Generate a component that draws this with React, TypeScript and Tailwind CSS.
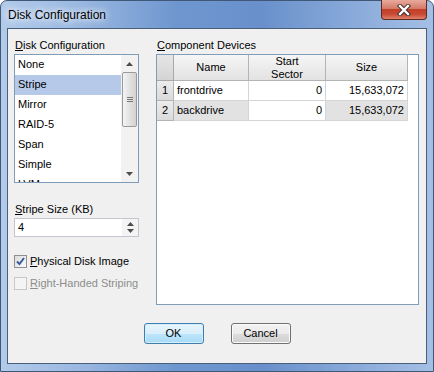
const items = ["None", "Stripe", "Mirror", "RAID-5", "Span", "Simple", "LVM"];

const rows = [
  { n: "1", name: "frontdrive", start: "0", size: "15,633,072", alt: false },
  { n: "2", name: "backdrive", start: "0", size: "15,633,072", alt: true },
];

function Arrow({ up }: { up?: boolean }) {
  return (
    <svg width="7" height="4" viewBox="0 0 7 4">
      <path d={up ? "M0 4 L3.5 0 L7 4 Z" : "M0 0 L3.5 4 L7 0 Z"} fill="#4d4d4d" />
    </svg>
  );
}

function Checkbox({ checked, disabled }: { checked?: boolean; disabled?: boolean }) {
  return (
    <div
      className={`w-[13px] h-[13px] border ${
        disabled
          ? "border-[#c8c8c8] bg-[#f4f4f4]"
          : "border-[#8e8f8f] bg-[linear-gradient(135deg,#dcdcdc,#fafafa)]"
      } flex items-center justify-center`}
    >
      {checked && (
        <svg width="9" height="9" viewBox="0 0 9 9">
          <path d="M1 4.5 L3.5 7 L8 1" fill="none" stroke="#3a5a9c" strokeWidth="2" />
        </svg>
      )}
    </div>
  );
}

export default function App() {
  return (
    <div className="w-[434px] h-[372px] bg-white font-['Liberation_Sans',Arial,sans-serif] text-[11px] text-black">
      <div className="w-full h-full rounded-t-[7px] border border-[#3f5878] bg-[linear-gradient(to_right,#b3cbea,#9ab8e1_18%,#6f97cf_40%,#6990cb_60%,#8eaedc_85%,#a5bfe4)] flex flex-col px-[6px] pb-[7px]">
        {/* title bar */}
        <div className="h-[27px] flex items-start">
          <div className="h-[27px] flex items-center pl-[1px] text-[12px] [text-shadow:0_0_6px_#ffffff,0_0_10px_#ffffff]">
            Disk Configuration
          </div>
          <div className="ml-auto -mt-[1px] w-[46px] h-[20px] rounded-b-[4px] border border-t-0 border-[#5c2b24] bg-[linear-gradient(#e8a99c,#d47a67_45%,#c2402a_50%,#c84a33_75%,#e0826b)] flex items-center justify-center">
            <svg width="14" height="12" viewBox="0 0 14 12">
              <path d="M3 2 L11 10 M11 2 L3 10" stroke="#3b2a2a" strokeWidth="4.2" strokeLinecap="square" />
              <path d="M3 2 L11 10 M11 2 L3 10" stroke="#ffffff" strokeWidth="2.4" strokeLinecap="square" />
            </svg>
          </div>
        </div>

        {/* client area */}
        <div className="flex-1 border border-[#4b5f7d] bg-[#f0f0f0] flex flex-col">
          <div className="flex pl-[6px] pt-[8px]">
            {/* left column */}
            <div className="w-[125px] flex flex-col">
              <div className="h-[17px] leading-[17px] pl-[1px]">
                <span className="underline">D</span>isk Configuration
              </div>
              <div className="h-[129px] border border-[#7f9db9] bg-white flex">
                <div className="flex-1 overflow-hidden">
                  {items.map((it) => (
                    <div
                      key={it}
                      className={`h-[20px] leading-[19px] pl-[3px] ${it === "Stripe" ? "bg-[#b6c9e9]" : ""}`}
                    >
                      {it}
                    </div>
                  ))}
                </div>
                <div className="w-[17px] bg-[#f2f2f2] flex flex-col">
                  <div className="h-[17px] flex items-center justify-center">
                    <Arrow up />
                  </div>
                  <div className="h-[55px] mx-[1px] rounded-[2px] border border-[#9a9a9a] bg-[linear-gradient(to_right,#f4f4f4,#e2e2e2_50%,#d2d2d2)] flex flex-col items-center justify-center gap-[1px]">
                    <div className="w-[6px] h-[1px] bg-[#777]" />
                    <div className="w-[6px] h-[1px] bg-[#777]" />
                    <div className="w-[6px] h-[1px] bg-[#777]" />
                  </div>
                  <div className="mt-auto h-[17px] flex items-center justify-center">
                    <Arrow />
                  </div>
                </div>
              </div>

              <div className="mt-[17px] h-[18px] leading-[18px] pl-[1px]">
                <span className="underline">S</span>tripe Size (KB)
              </div>
              <div className="h-[19px] border border-[#c3c6cc] bg-white flex">
                <div className="flex-1 pl-[3px] leading-[17px]">4</div>
                <div className="w-[16px] flex flex-col items-center justify-center gap-[3px] bg-[#f4f4f4]">
                  <Arrow up />
                  <Arrow />
                </div>
              </div>

              <div className="mt-[18px] h-[13px] flex items-center gap-[3px]">
                <Checkbox checked />
                <span>
                  <span className="underline">P</span>hysical Disk Image
                </span>
              </div>
              <div className="mt-[9px] h-[13px] flex items-center gap-[3px] text-[#8d8d8d]">
                <Checkbox disabled />
                <span>
                  <span className="underline">R</span>ight-Handed Striping
                </span>
              </div>
            </div>

            {/* right column */}
            <div className="ml-[17px] w-[263px] flex flex-col">
              <div className="h-[17px] leading-[17px] pl-[1px]">
                <span className="underline">C</span>omponent Devices
              </div>
              <div className="h-[251px] border border-[#7f9db9] bg-white">
                <div className="grid grid-cols-[17px_75px_77px_82px]">
                  <div className="h-[26px] bg-[linear-gradient(#e6e6e6,#d4d4d4)] border-r border-b border-[#a8a8a8]" />
                  <div className="h-[26px] bg-[linear-gradient(#f6f6f6,#e2e2e2)] border-r border-b border-[#b4b4b4] flex items-center justify-center">
                    Name
                  </div>
                  <div className="h-[26px] bg-[linear-gradient(#f6f6f6,#e2e2e2)] border-r border-b border-[#b4b4b4] flex items-center justify-center text-center leading-[13px]">
                    Start
                    <br />
                    Sector
                  </div>
                  <div className="h-[26px] bg-[linear-gradient(#f6f6f6,#e2e2e2)] border-r border-b border-[#b4b4b4] flex items-center justify-center">
                    Size
                  </div>
                  {rows.map((r) => (
                    <>
                      <div
                        key={r.n + "h"}
                        className="h-[20px] bg-[linear-gradient(#ececec,#dadada)] border-r border-b border-[#b4b4b4] flex items-center justify-center"
                      >
                        {r.n}
                      </div>
                      <div
                        key={r.n + "a"}
                        className={`h-[20px] ${r.alt ? "bg-[#e2e2e2]" : "bg-white"} border-r border-b border-[#d4d4d4] flex items-center pl-[3px]`}
                      >
                        {r.name}
                      </div>
                      <div
                        key={r.n + "b"}
                        className="h-[20px] bg-white border-r border-b border-[#d4d4d4] flex items-center justify-end pr-[3px]"
                      >
                        {r.start}
                      </div>
                      <div
                        key={r.n + "c"}
                        className={`h-[20px] ${r.alt ? "bg-[#e2e2e2]" : "bg-white"} border-r border-b border-[#d4d4d4] flex items-center justify-end pr-[3px]`}
                      >
                        {r.size}
                      </div>
                    </>
                  ))}
                </div>
              </div>
            </div>
          </div>

          {/* buttons */}
          <div className="mt-[18px] flex justify-center gap-[27px]">
            <button className="w-[60px] h-[21px] rounded-[3px] border border-[#3c7fb1] bg-[linear-gradient(#e8f5fc,#d9effb_50%,#bee6fd_51%,#a7d9f5)] shadow-[inset_0_0_0_1px_#d6eefb]">
              OK
            </button>
            <button className="w-[60px] h-[21px] rounded-[3px] border border-[#707070] bg-[linear-gradient(#f2f2f2,#ebebeb_50%,#dddddd_51%,#cfcfcf)] shadow-[inset_0_0_0_1px_#fbfbfb]">
              Cancel
            </button>
          </div>
        </div>
      </div>
    </div>
  );
}
